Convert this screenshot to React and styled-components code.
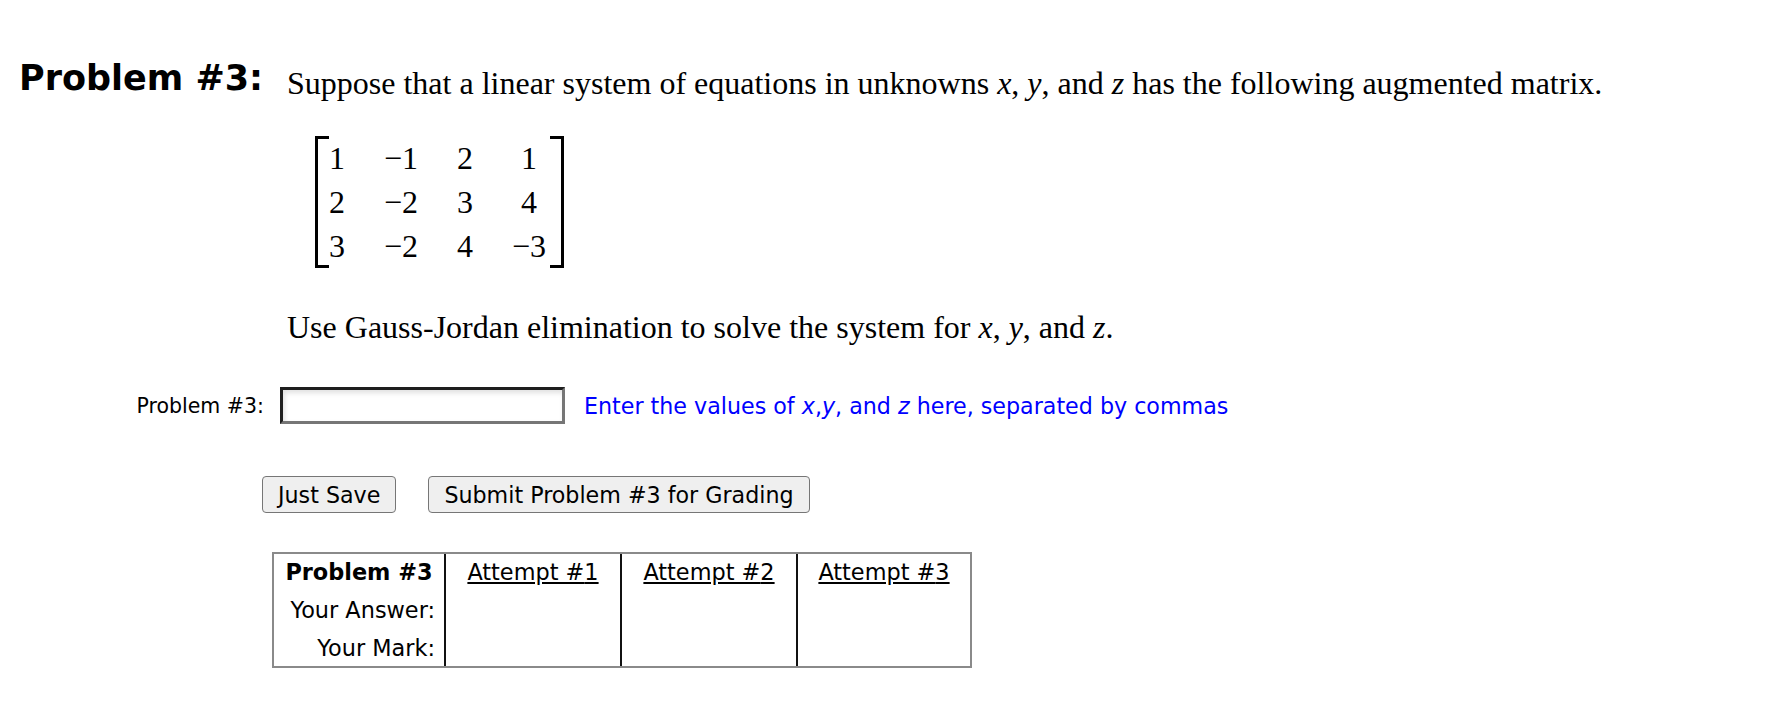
import React from 'react';
import styled, { createGlobalStyle } from 'styled-components';

const GlobalStyle = createGlobalStyle`
  body {
    margin: 0;
    background: #fff;
    color: #000;
    font-family: 'DejaVu Sans', Verdana, sans-serif;
  }
`;

const Page = styled.div`
  padding: 58px 0 40px 19px;
`;

const HeaderRow = styled.div`
  display: flex;
  align-items: flex-start;
`;

const ProblemTitle = styled.h1`
  margin: 0;
  width: 268px;
  font-family: 'DejaVu Sans', Verdana, sans-serif;
  font-size: 35px;
  font-weight: bold;
  line-height: 40px;
`;

const Prose = styled.p`
  margin: ${({ top }) => top || 0}px 0 0;
  font-family: 'Liberation Serif', 'Times New Roman', serif;
  font-size: 32px;
  line-height: 40px;

  i {
    font-style: italic;
  }
`;

const Body = styled.div`
  margin-left: 268px;
`;

const Matrix = styled.div`
  position: relative;
  display: inline-grid;
  grid-template-columns: 24px 40px 24px 40px;
  grid-auto-rows: 44px;
  column-gap: 32px;
  justify-items: center;
  align-items: center;
  margin: 33px 0 0 28px;
  padding: 0 15px 0 10px;
  font-family: 'Liberation Serif', 'Times New Roman', serif;
  font-size: 32px;

  &::before,
  &::after {
    content: '';
    position: absolute;
    top: 0;
    bottom: 0;
    width: 11px;
    border: 3px solid #000;
  }
  &::before {
    left: 0;
    border-right: none;
  }
  &::after {
    right: 0;
    border-left: none;
  }
`;

const AnswerRow = styled.div`
  display: flex;
  align-items: center;
  margin-top: 40px;
`;

const FieldLabel = styled.label`
  width: 245px;
  text-align: right;
  font-size: 20.5px;
`;

const AnswerInput = styled.input`
  box-sizing: border-box;
  width: 285px;
  height: 37px;
  margin-left: 16px;
  padding: 0 6px;
  background: #fff;
  border-style: solid;
  border-width: 3px;
  border-color: #1e1e1e #767676 #767676 #1e1e1e;
  box-shadow: inset 2px 3px 5px rgba(0, 0, 0, 0.12);
  font: inherit;
  outline: none;
`;

const Hint = styled.span`
  margin-left: 19px;
  color: #0000ff;
  font-size: 22.2px;
`;

const ButtonRow = styled.div`
  display: flex;
  gap: 32px;
  margin: 52px 0 0 243px;
`;

const Button = styled.button`
  height: 37px;
  padding: 0 15px;
  background: #efefef;
  border: 1px solid #767676;
  border-radius: 4px;
  color: #000;
  font-family: 'DejaVu Sans', Verdana, sans-serif;
  font-size: 22.2px;
`;

const Attempts = styled.table`
  margin: 39px 0 0 253px;
  border: 2px solid #8a8a8a;
  border-spacing: 0;
  font-size: 22.4px;
`;

const Row = styled.tr`
  height: ${({ h }) => h}px;
`;

const Cell = styled.td`
  padding: 0 9px 0 0;
  width: ${({ w }) => w}px;
  box-sizing: border-box;
  text-align: ${({ align }) => align || 'center'};
  border-left: ${({ first }) => (first ? 'none' : '2px solid #111')};
  font-weight: ${({ bold }) => (bold ? 'bold' : 'normal')};
  vertical-align: middle;

  a {
    color: #000;
    text-decoration: underline;
  }
`;

const matrix = [
  ['1', '\u22121', '2', '1'],
  ['2', '\u22122', '3', '4'],
  ['3', '\u22122', '4', '\u22123'],
];

const widths = [170, 176, 176, 174];

const resultRows = [
  { label: 'Your Answer:', h: 40 },
  { label: 'Your Mark:', h: 36 },
];

export default function App() {
  return (
    <Page>
      <GlobalStyle />
      <HeaderRow>
        <ProblemTitle>Problem #3:</ProblemTitle>
        <Prose top={5}>
          Suppose that a linear system of equations in unknowns <i>x</i>, <i>y</i>, and{' '}
          <i>z</i> has the following augmented matrix.
        </Prose>
      </HeaderRow>
      <Body>
        <Matrix>
          {matrix.flat().map((v, i) => (
            <span key={i}>{v}</span>
          ))}
        </Matrix>
        <Prose top={39}>
          Use Gauss-Jordan elimination to solve the system for <i>x</i>, <i>y</i>, and <i>z</i>.
        </Prose>
      </Body>
      <AnswerRow>
        <FieldLabel htmlFor="answer">Problem #3:</FieldLabel>
        <AnswerInput id="answer" type="text" />
        <Hint>
          Enter the values of <i>x</i>,<i>y</i>, and <i>z</i> here, separated by commas
        </Hint>
      </AnswerRow>
      <ButtonRow>
        <Button>Just Save</Button>
        <Button>Submit Problem #3 for Grading</Button>
      </ButtonRow>
      <Attempts>
        <tbody>
          <Row h={36}>
            <Cell first bold w={widths[0]} style={{ paddingRight: 0 }}>
              Problem #3
            </Cell>
            {[1, 2, 3].map(n => (
              <Cell key={n} w={widths[n]} style={{ paddingRight: 0 }}>
                <a href="#">Attempt #{n}</a>
              </Cell>
            ))}
          </Row>
          {resultRows.map(({ label, h }) => (
            <Row key={label} h={h}>
              <Cell first align="right" w={widths[0]}>
                {label}
              </Cell>
              {[1, 2, 3].map(n => (
                <Cell key={n} w={widths[n]} />
              ))}
            </Row>
          ))}
        </tbody>
      </Attempts>
    </Page>
  );
}
